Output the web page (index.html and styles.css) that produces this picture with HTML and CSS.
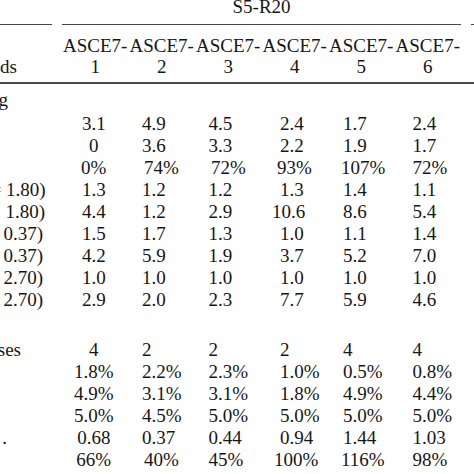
FILE: index.html
```html
<!DOCTYPE html>
<html>
<head>
<meta charset="utf-8">
<link rel="stylesheet" href="styles.css">
</head>
<body>
<table class="tbl">
  <colgroup>
    <col class="lab-col">
    <col class="dc"><col class="dc"><col class="dc"><col class="dc"><col class="dc"><col class="dc">
    <col class="tail">
  </colgroup>
  <tr class="grp">
    <td><div class="rule r-l"></div></td>
    <td colspan="6"><div class="gtitle">S5-R20</div><div class="rule"></div></td>
    <td><div class="rule r-r"></div></td>
  </tr>
  <tr class="hd">
    <td><div class="lab e17">Methods</div></td>
    <td>ASCE7-<br>1</td>
    <td>ASCE7-<br>2</td>
    <td>ASCE7-<br>3</td>
    <td>ASCE7-<br>4</td>
    <td>ASCE7-<br>5</td>
    <td>ASCE7-<br>6</td>
    <td></td>
  </tr>
  <tr class="sec">
    <td><div class="lab e8">Scaling</div></td>
    <td colspan="7"></td>
  </tr>
  <tr class="d"><td></td><td>3.1</td><td>4.9</td><td>4.5</td><td>2.4</td><td>1.7</td><td>2.4</td><td></td></tr>
  <tr class="d"><td></td><td>0</td><td>3.6</td><td>3.3</td><td>2.2</td><td>1.9</td><td>1.7</td><td></td></tr>
  <tr class="d"><td></td><td>0%</td><td class="pl15">74%</td><td class="pl16">72%</td><td class="pl15">93%</td><td class="pl13">107%</td><td>72%</td><td></td></tr>
  <tr class="d"><td><div class="lab e46">= 1.80)</div></td><td>1.3</td><td>1.2</td><td>1.2</td><td>1.3</td><td>1.4</td><td>1.1</td><td></td></tr>
  <tr class="d"><td><div class="lab e45">1.80)</div></td><td>4.4</td><td>1.2</td><td>2.9</td><td class="pl10">10.6</td><td>8.6</td><td>5.4</td><td></td></tr>
  <tr class="d"><td><div class="lab e43">0.37)</div></td><td>1.5</td><td>1.7</td><td>1.3</td><td>1.0</td><td>1.1</td><td>1.4</td><td></td></tr>
  <tr class="d"><td><div class="lab e43">0.37)</div></td><td>4.2</td><td>5.9</td><td>1.9</td><td>3.7</td><td>5.2</td><td>7.0</td><td></td></tr>
  <tr class="d"><td><div class="lab e43">2.70)</div></td><td>1.0</td><td>1.0</td><td>1.0</td><td>1.0</td><td>1.0</td><td>1.0</td><td></td></tr>
  <tr class="d"><td><div class="lab e43">2.70)</div></td><td>2.9</td><td>2.0</td><td>2.3</td><td>7.7</td><td>5.9</td><td>4.6</td><td></td></tr>
  <tr class="gap"><td colspan="8"></td></tr>
  <tr class="d"><td><div class="lab e21">Cases</div></td><td>4</td><td>2</td><td>2</td><td>2</td><td>4</td><td>4</td><td></td></tr>
  <tr class="d"><td></td><td>1.8%</td><td>2.2%</td><td>2.3%</td><td>1.0%</td><td>0.5%</td><td>0.8%</td><td></td></tr>
  <tr class="d"><td></td><td>4.9%</td><td>3.1%</td><td>3.1%</td><td>1.8%</td><td>4.9%</td><td>4.4%</td><td></td></tr>
  <tr class="d"><td></td><td>5.0%</td><td>4.5%</td><td>5.0%</td><td>5.0%</td><td>5.0%</td><td>5.0%</td><td></td></tr>
  <tr class="d"><td><div class="lab e7">.</div></td><td>0.68</td><td>0.37</td><td>0.44</td><td>0.94</td><td>1.44</td><td>1.03</td><td></td></tr>
  <tr class="d"><td></td><td>66%</td><td class="pl15">40%</td><td>45%</td><td class="pl12">100%</td><td class="pl13">116%</td><td>98%</td><td></td></tr>
</table>
</body>
</html>
```

FILE: styles.css
```css
html, body {
  margin: 0;
  padding: 0;
  background: #ffffff;
}

body {
  font-family: "Liberation Serif", "Times New Roman", serif;
  font-size: 19px;
  color: #161616;
  overflow: hidden;
}

.tbl {
  border-collapse: separate;
  border-spacing: 0;
  table-layout: fixed;
  width: 474px;
  margin-top: -4px;
}

col.lab-col { width: 62px; }
col.dc { width: 66.5px; }
col.tail { width: 13px; }

.tbl td {
  padding: 0;
  line-height: 22px;
  white-space: nowrap;
}

/* group header row */
.grp td {
  vertical-align: bottom;
  text-align: center;
}

.rule {
  border-top: 1px solid #454545;
  margin-top: 6px;
}

.rule.r-l { margin-right: 10px; }
.rule.r-r { margin-left: 10px; }

/* column header row */
.hd td {
  padding-top: 10px;
  padding-bottom: 5px;
  line-height: 21px;
  text-align: center;
  vertical-align: bottom;
  border-bottom: 2px solid #4a4a4a;
}

/* section title row */
.sec td {
  padding-top: 5px;
  padding-bottom: 2px;
}

.gap td {
  height: 28px;
}

/* row labels (cropped at left edge) */
.lab {
  display: flex;
  justify-content: flex-end;
  white-space: nowrap;
  text-align: left;
}

.e46 { padding-right: 16.5px; }
.e45 { padding-right: 17px; }
.e43 { padding-right: 19px; }
.e21 { padding-right: 41px; }
.e17 { padding-right: 45px; }
.e8 { padding-right: 54px; }
.e7 { padding-right: 55px; }

/* data columns */
.d td:nth-child(2) { text-align: center; padding-right: 3px; }
.d td:nth-child(3) { padding-left: 13.5px; }
.d td:nth-child(4) { padding-left: 13.5px; }
.d td:nth-child(5) { padding-left: 18.5px; }
.d td:nth-child(6) { padding-left: 15px; }
.d td:nth-child(7) { padding-left: 18px; }

.d td.pl10 { padding-left: 10.5px; }
.d td.pl12 { padding-left: 12.5px; }
.d td.pl13 { padding-left: 13px; }
.d td.pl15 { padding-left: 15.5px; }
.d td.pl16 { padding-left: 16px; }
```
